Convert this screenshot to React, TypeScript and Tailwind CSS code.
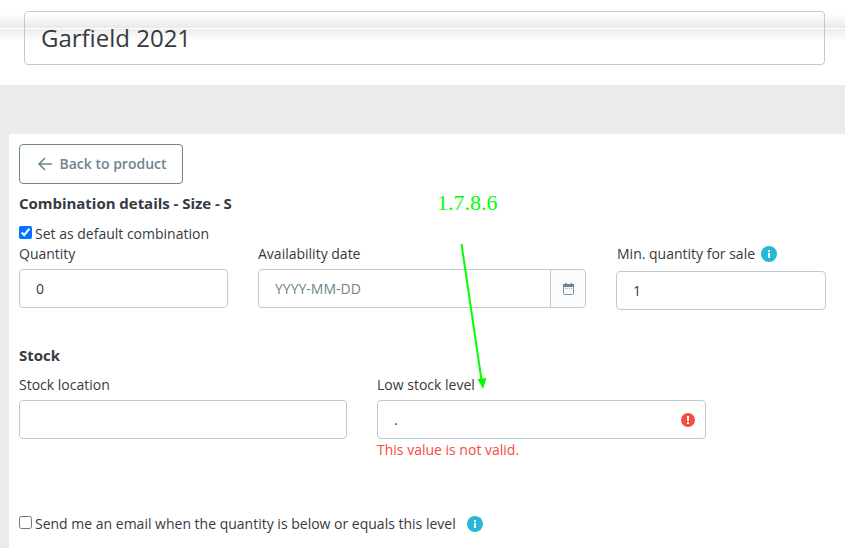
import React from 'react';

const font = { fontFamily: '"Open Sans", sans-serif' };

function InfoIcon() {
  return (
    <svg width="16" height="16" viewBox="0 0 16 16" className="shrink-0">
      <circle cx="8" cy="8" r="8" fill="#25b9d7" />
      <rect x="7" y="7" width="2" height="5" fill="#fff" />
      <rect x="7" y="4" width="2" height="2" fill="#fff" />
    </svg>
  );
}

function Field({ label, value, className }: { label: string; value?: string; className: string }) {
  return (
    <div className={className}>
      <label className="block h-[19px] text-sm leading-[19px] text-[#363a41]">{label}</label>
      <input
        readOnly
        value={value ?? ''}
        className="mt-[6px] block h-[39px] w-full rounded border border-[#bbcdd2] bg-white px-4 text-sm text-[#363a41] outline-none"
      />
    </div>
  );
}

export default function App() {
  return (
    <div className="relative h-[548px] w-[845px] overflow-hidden bg-white" style={font}>
      {/* strip left over from the screenshot stitch, sits behind the title text */}
      <div className="pointer-events-none absolute left-0 right-0 top-[14px] h-[14px] bg-gradient-to-b from-white/0 to-[#e9e9e9]" />
      <div className="pointer-events-none absolute left-0 right-0 top-[29px] h-[12px] bg-gradient-to-b from-[#ececec] to-white/0" />

      <div className="relative h-[85px] pl-6 pt-[11px]">
        <input
          readOnly
          value="Garfield 2021"
          className="block h-[54px] w-[801px] rounded border border-[#bbcdd2] bg-transparent px-4 pb-[2px] text-2xl text-[#363a41] outline-none"
        />
      </div>

      <div className="bg-[#eaebec] pl-[9px] pt-[49px]">
        <div className="h-[414px] bg-white pl-[10px] pt-[10px]">
          <button className="flex h-10 w-[164px] items-center justify-center gap-[6px] rounded border border-[#6c868e] bg-white pl-[2px] text-sm font-semibold text-[#6c868e]">
            <svg width="16" height="16" viewBox="0 0 16 16" fill="none" stroke="#6c868e" strokeWidth="1.6">
              <path d="M15 8H2M8 2 2 8l6 6" />
            </svg>
            Back to product
          </button>
          <h2 className="mt-[10px] text-[15px] font-bold leading-[19px] tracking-[-0.03px] text-[#363a41]">Combination details - Size - S</h2>
          <label className="mt-[11px] flex h-[19px] items-center text-sm text-[#363a41]">
            <input type="checkbox" readOnly checked className="m-0 mb-[2px] mr-[3px] h-[13px] w-[13px]" />
            Set as default combination
          </label>

          <div className="flex items-start">
            <Field label="Quantity" value="0" className="mt-[1px] w-[209px]" />
            <div className="ml-[30px] mt-[1px] w-[328px]">
              <label className="block h-[19px] text-sm leading-[19px] text-[#363a41]">Availability date</label>
              <div className="mt-[6px] flex h-[39px] rounded border border-[#bbcdd2] bg-white">
                <input readOnly placeholder="YYYY-MM-DD" className="min-w-0 flex-1 bg-transparent px-4 text-sm text-[#363a41] outline-none placeholder:text-[#6c868e]" />
                <div className="flex w-[35px] items-center justify-center rounded-r border-l border-[#bbcdd2] bg-[#fafbfc]">
                  <svg width="11" height="12" viewBox="0 0 11 12">
                    <rect x="0.5" y="1.5" width="10" height="10" rx="1" fill="#f4f6f7" stroke="#7d959c" />
                    <rect x="0" y="1" width="11" height="3" fill="#6c868e" />
                    <rect x="2" y="0" width="1.5" height="2" fill="#6c868e" />
                    <rect x="7.5" y="0" width="1.5" height="2" fill="#6c868e" />
                    <path d="M2 5.5h7" stroke="#a9bcc1" strokeDasharray="1 1" />
                  </svg>
                </div>
              </div>
            </div>
            <div className="ml-[30px] mt-[1px] w-[210px]">
              <label className="flex h-[19px] items-center gap-[6px] pl-px text-sm text-[#363a41]">
                Min. quantity for sale
                <InfoIcon />
              </label>
              <input readOnly value="1" className="mt-[8px] block h-[39px] w-full rounded border border-[#bbcdd2] bg-white px-4 text-sm text-[#363a41] outline-none" />
            </div>
          </div>

          <h3 className="mt-[36px] text-[15px] font-bold leading-[19px] text-[#363a41]">Stock</h3>
          <div className="mt-[10px] flex items-start">
            <Field label="Stock location" className="w-[328px]" />
            <div className="ml-[30px] w-[329px]">
              <label className="block h-[19px] text-sm leading-[19px] text-[#363a41]">Low stock level</label>
              <div className="mt-[6px] flex h-[39px] items-center rounded border border-[#bbcdd2] bg-white pl-4 pr-[10px]">
                <input readOnly value="." className="min-w-0 flex-1 bg-transparent text-sm text-[#363a41] outline-none" />
                <svg width="14" height="14" viewBox="0 0 14 14" className="shrink-0">
                  <circle cx="7" cy="7" r="7" fill="#f54c3e" />
                  <rect x="6" y="3" width="2" height="5" fill="#fff" />
                  <rect x="6" y="9" width="2" height="2" fill="#fff" />
                </svg>
              </div>
              <p className="mt-[1px] text-sm leading-[19px] text-[#f54c3e]">This value is not valid.</p>
            </div>
          </div>

          <label className="mt-[55px] flex h-[19px] items-center text-sm text-[#363a41]">
            <input type="checkbox" readOnly className="m-0 mb-[2px] mr-[3px] h-[13px] w-[13px]" />
            Send me an email when the quantity is below or equals this level
            <span className="ml-[11px]"><InfoIcon /></span>
          </label>
        </div>
      </div>

      {/* version annotation drawn over the form */}
      <span className="absolute left-[437px] top-[191px] text-[22px] leading-6 text-[#00ff00]" style={{ fontFamily: '"Liberation Serif", serif' }}>
        1.7.8.6
      </span>
      <svg className="pointer-events-none absolute left-0 top-0" width="845" height="548">
        <path d="M461.5 244 481.5 380" stroke="#00ff00" strokeWidth="2" />
        <path d="M477.5 379 486.5 378 483 389Z" fill="#00ff00" />
      </svg>
    </div>
  );
}
